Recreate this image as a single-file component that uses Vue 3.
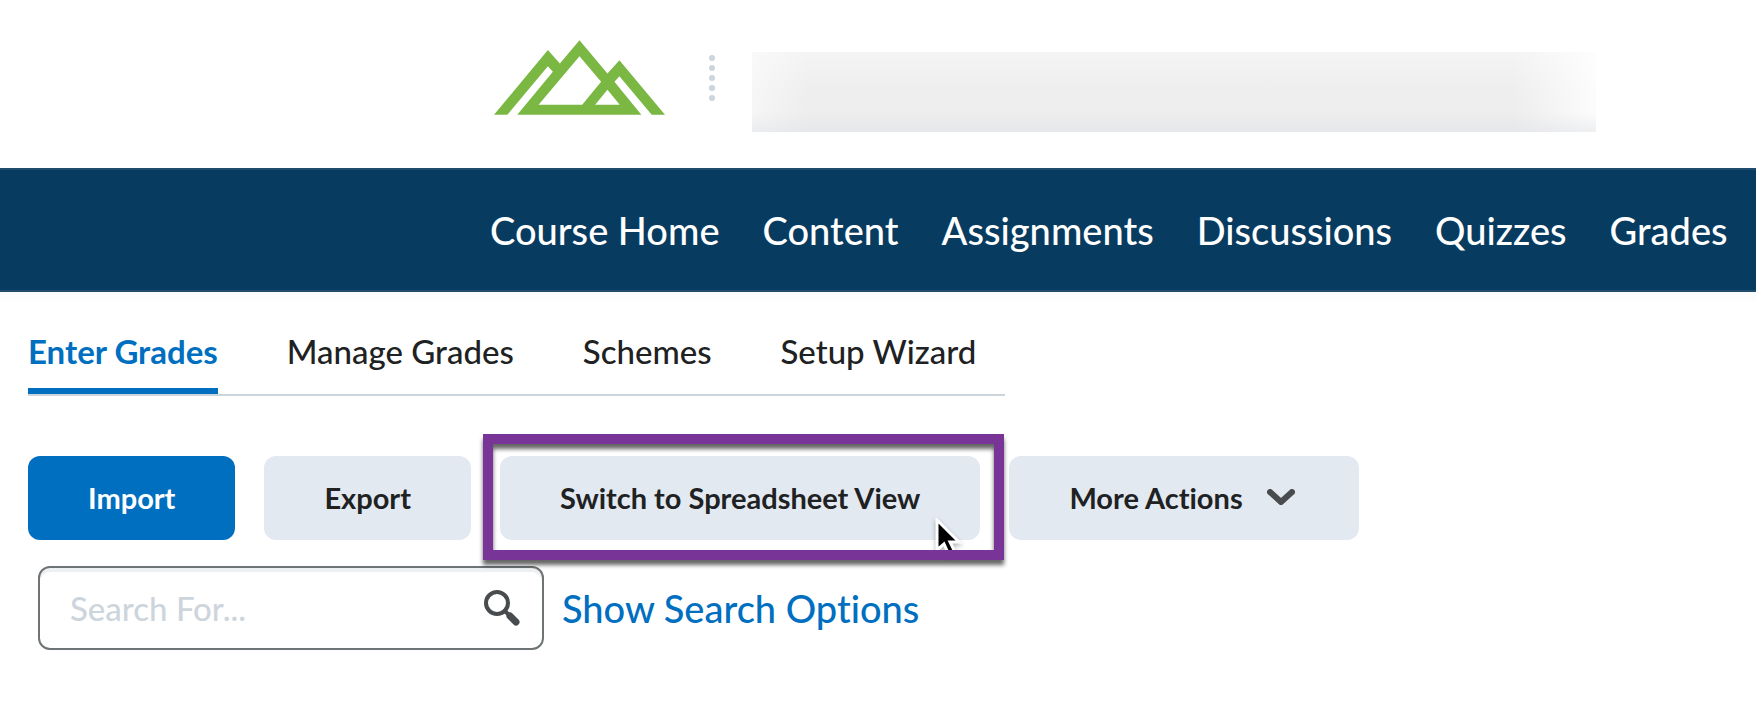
<template>
  <div class="page">
    <header class="site-header">
      <a href="#" class="logo-link" aria-label="Home">
        <svg class="logo" viewBox="0 0 514 224" aria-hidden="true">
          <path
            fill-rule="evenodd"
            d="M0 224 162 29 198 70 257 0 341 100 377 60 514 224H474L377 108 362 125 443 224H70L177 95 162 78 40 224ZM134 194 257 48 322 125 265 194ZM304 194 341 149 378 194Z"
          />
        </svg>
      </a>
      <div class="dots">
        <span v-for="n in 5" :key="n" class="dot"></span>
      </div>
      <div class="course-title"></div>
    </header>

    <nav class="main-nav">
      <a v-for="link in navLinks" :key="link" href="#" class="nav-link">{{ link }}</a>
    </nav>

    <main class="content">
      <nav class="tabs">
        <a
          v-for="tab in tabs"
          :key="tab"
          href="#"
          class="tab"
          :class="{ active: tab === activeTab }"
          @click.prevent="activeTab = tab"
        >{{ tab }}</a>
      </nav>

      <div class="actions">
        <button type="button" class="btn primary">Import</button>
        <button type="button" class="btn">Export</button>
        <div class="highlighted">
          <button type="button" class="btn">Switch to Spreadsheet View</button>
          <svg class="pointer" viewBox="0 0 28 40" aria-hidden="true">
            <path d="M2 2V32L9 26 14 37 20 34 15 24H24Z" />
          </svg>
          <span class="highlight-frame"></span>
        </div>
        <button type="button" class="btn menu">
          More Actions
          <svg class="chevron" viewBox="0 0 28 16" aria-hidden="true">
            <path d="M3 3 14 13 25 3" />
          </svg>
        </button>
      </div>

      <form class="search-row" @submit.prevent>
        <div class="search-box">
          <input v-model="query" type="text" class="search-input" placeholder="Search For..." aria-label="Search For" />
          <button type="submit" class="search-btn" aria-label="Search">
            <svg viewBox="0 0 36 36" aria-hidden="true">
              <circle cx="13" cy="13" r="11" />
              <path class="neck" d="M21 21 25 25" />
              <path class="handle" d="M26 26 32 32" />
            </svg>
          </button>
        </div>
        <a href="#" class="options-link">Show Search Options</a>
      </form>
    </main>
  </div>
</template>

<script setup>
import { ref } from "vue";

const navLinks = ["Course Home", "Content", "Assignments", "Discussions", "Quizzes", "Grades"];
const tabs = ["Enter Grades", "Manage Grades", "Schemes", "Setup Wizard"];

const activeTab = ref("Enter Grades");
const query = ref("");
</script>

<style>
body { margin: 0; background: #fff; }
</style>

<style scoped>
.page {
  font-family: Lato, "Open Sans", sans-serif; font-weight: 500; font-variant-ligatures: none;
  color: #202122; overflow-x: hidden;
}
.page * { box-sizing: border-box; }
a { text-decoration: none; }

.site-header { display: flex; align-items: flex-start; height: 168px; padding: 40px 160px 0 494px; }
.logo-link { display: block; flex: none; }
.logo { display: block; width: 171px; height: 75px; fill: #7ab843; }
.dots { display: flex; flex-direction: column; gap: 4px; margin: 15px 37px 0 44px; }
.dot { width: 6px; height: 6px; border-radius: 50%; background: #cdd5dc; }
.course-title {
  flex: 1; height: 80px; margin-top: 12px;
  background:
    linear-gradient(transparent 75%, rgba(225, 227, 231, 0.5)),
    linear-gradient(to right, rgba(255, 255, 255, 0.5), transparent 7%, transparent 90%, rgba(255, 255, 255, 0.85)),
    linear-gradient(#f4f4f4, #eeeeee 50%, #ececec);
}

.main-nav {
  display: flex; align-items: center; gap: 43px;
  height: 124px; padding-left: 490px;
  background: #083b60; border-top: 2px solid #1f4b6d; border-bottom: 2px solid #1f4b6d;
}
.nav-link { font-size: 38px; line-height: 48px; color: #fff; white-space: nowrap; }

.content { padding: 0 28px; background: linear-gradient(#fafafa, #fff 12px); }
.tabs {
  display: flex; gap: 69px; width: fit-content;
  padding: 39px 29px 0 0; border-bottom: 2px solid #cdd5dc;
}
.tab { font-size: 33px; line-height: 40px; padding-bottom: 23px; color: #202122; white-space: nowrap; }
.tab.active { color: #006fbf; font-weight: 700; padding-bottom: 17px; border-bottom: 6px solid #006fbf; }

.actions { display: flex; gap: 29px; margin-top: 60px; }
.btn {
  display: flex; align-items: center; justify-content: center; gap: 24px;
  height: 84px; padding: 0 60px 2px; border: 0; border-radius: 12px;
  background: #e3e9f1; color: #202122; cursor: pointer;
  font-family: inherit; font-size: 29px; font-weight: 700; font-variant-ligatures: none; white-space: nowrap;
}
.btn.primary { background: #006fbf; color: #fff; }
.btn.menu { padding-right: 64px; }
.chevron { width: 28px; height: 16px; fill: none; stroke: #494c4e; stroke-width: 6; stroke-linecap: round; stroke-linejoin: round; }

.highlighted { position: relative; }
.highlight-frame {
  position: absolute; inset: -22px -24px -20px -17px; pointer-events: none;
  border: 10px solid #783496;
  filter: drop-shadow(0 5px 2px rgba(0, 0, 0, 0.6));
}
.pointer {
  position: absolute; right: 17px; bottom: -18px; width: 28px; height: 40px;
  fill: #000; stroke: #fff; stroke-width: 3;
  filter: drop-shadow(0 2px 2px rgba(0, 0, 0, 0.3));
}

.search-row { display: flex; align-items: center; gap: 18px; margin-top: 26px; padding-left: 10px; }
.search-box {
  display: flex; align-items: center; width: 506px; height: 84px; padding-right: 22px;
  border: 2px solid #6e7376; border-radius: 12px; background: #fff;
  box-shadow: inset 0 4px 0 #eff0f2;
}
.search-input {
  flex: 1; min-width: 0; height: 100%; padding: 0 0 0 30px; border: 0; outline: 0;
  background: transparent; color: #202122; font-family: inherit; font-size: 33px; font-weight: 500;
}
.search-input::placeholder { color: #cdd5dc; opacity: 1; }
.search-btn { display: flex; padding: 0; border: 0; background: transparent; cursor: pointer; }
.search-btn svg { width: 36px; height: 36px; fill: none; stroke: #494c4e; stroke-width: 4; stroke-linecap: round; }
.search-btn .handle { stroke-width: 7; }
.options-link { font-size: 38px; line-height: 48px; color: #006fbf; white-space: nowrap; }
</style>
